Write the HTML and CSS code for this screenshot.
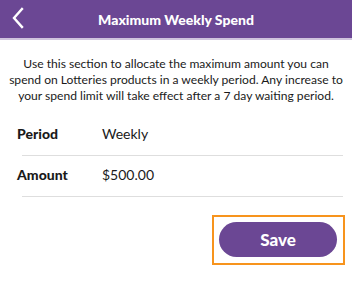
FILE: index.html
```html
<html>
<head>
	<link rel="stylesheet" href="styles.css">
</head>
<body>
	<div class="titlebar">
		<a class="backLink" href="#">
			<svg width="14" height="22" viewBox="0 0 14 22">
				<polyline points="11,2 3,11 11,20" fill="none" stroke="#fff" stroke-width="2.4" stroke-linecap="square"></polyline>
			</svg>
		</a>
		<h1 class="title">Maximum Weekly Spend</h1>
	</div>

	<p class="intro">Use this section to allocate the maximum amount you can spend on Lotteries products in a weekly period. Any increase to your spend limit will take effect after a 7 day waiting period.</p>

	<div class="details">
		<div class="detailRow">
			<span class="detailLabel">Period</span>
			<span class="detailValue">Weekly</span>
		</div>
		<div class="detailRow">
			<span class="detailLabel">Amount</span>
			<span class="detailValue">$500.00</span>
		</div>
	</div>

	<div class="actions">
		<div class="focusBox">
			<button class="saveButton" type="button">Save</button>
		</div>
	</div>
</body>
</html>
```

FILE: styles.css
```css
body {
	margin: 0px;
	background-color: #fff;
	font-family: Lato, "Open Sans", sans-serif;
	color: #1a1a1a;
}

.titlebar {
	position: relative;
	height: 38px;
	background-color: #6b4794;
	border-bottom: 2px solid #cfc3dd;
	display: flex;
	align-items: center;
	justify-content: center;
}

.backLink {
	position: absolute;
	left: 11px;
	top: 7px;
	display: block;
}

.title {
	margin: 0px;
	color: #fff;
	font-size: 14px;
	font-weight: 900;
}

.intro {
	margin: 16px 7px 0px 7px;
	text-align: center;
	font-size: 12.1px;
	line-height: 16px;
}

.details {
	margin: 11px 9px 0px 22px;
}

.detailRow {
	display: flex;
	align-items: center;
	padding: 10px 0px 12px 0px;
	line-height: 18px;
	border-bottom: 1px solid #dedede;
	font-size: 14px;
}

.detailLabel {
	margin-left: -5px;
	width: 85px;
	font-weight: 900;
}

.actions {
	display: flex;
	justify-content: flex-end;
	margin: 18px 7px 0px 0px;
}

.focusBox {
	border: 2px solid #f7941d;
	padding: 5px 6px 6px 5px;
}

.saveButton {
	display: block;
	width: 118px;
	height: 35px;
	border: none;
	border-radius: 18px;
	background-color: #6b4794;
	color: #fff;
	font-family: Lato, "Open Sans", sans-serif;
	font-size: 17px;
	font-weight: 900;
}
```
